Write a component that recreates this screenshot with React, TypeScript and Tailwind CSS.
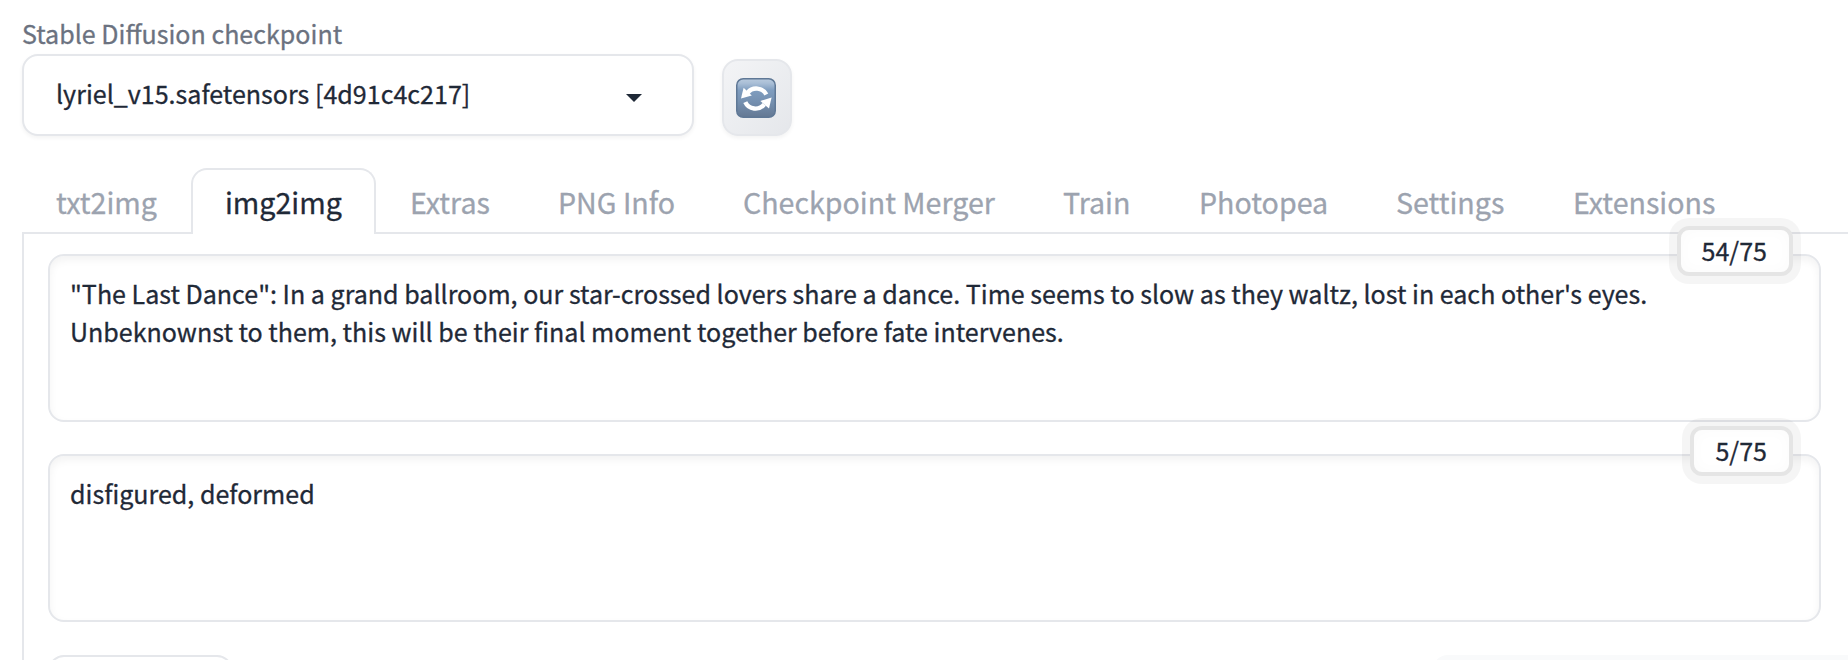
import clsx from 'clsx';

const tabs = [
  { label: 'txt2img', width: 'w-[169px]' },
  { label: 'img2img', width: 'w-[185px]' },
  { label: 'Extras', width: 'w-[148px]' },
  { label: 'PNG Info', width: 'w-[185px]' },
  { label: 'Checkpoint Merger', width: 'w-[320px]' },
  { label: 'Train', width: 'w-[136px]' },
  { label: 'Photopea', width: 'w-[197px]' },
  { label: 'Settings', width: 'w-[177px]' },
  { label: 'Extensions', width: 'w-[210px]' },
];

function RefreshIcon() {
  return (
    <svg width="40" height="40" viewBox="0 0 40 40" fill="none">
      <defs>
        <linearGradient id="tile" x1="0" y1="0" x2="0" y2="1">
          <stop offset="0" stopColor="#b9cade" />
          <stop offset="0.12" stopColor="#a9bed6" />
          <stop offset="0.3" stopColor="#7f9dbf" />
          <stop offset="0.6" stopColor="#7590b0" />
          <stop offset="1" stopColor="#647893" />
        </linearGradient>
      </defs>
      <rect x="0.75" y="0.75" width="38.5" height="38.5" rx="6.5" fill="url(#tile)" stroke="#5f7896" strokeWidth="1.5" />
      <path d="M30.3 16.6A11 10.6 0 0 0 11.6 14.8" stroke="white" strokeWidth="4.4" />
      <path d="M7.6 9.8 5 20.4 15.8 17.4Z" fill="white" />
      <path d="M9.3 24.2A11 10.6 0 0 0 28.2 26.4" stroke="white" strokeWidth="4.4" />
      <path d="M35.6 19.4 33 30.6 24.4 23Z" fill="white" />
    </svg>
  );
}

function PromptBox({ text, count }: { text: string; count: string }) {
  return (
    <div className="relative shrink-0 w-[1773px] h-[168px]">
      <textarea
        readOnly
        value={text}
        className="block w-full h-full resize-none outline-none rounded-[16px] border-2 border-[#e5e7eb] bg-white px-5 pt-[18px] text-[25.06px] leading-[38px] text-[#1f2937] shadow-[inset_0_4px_8px_0_rgba(0,0,0,0.05)]"
      />
      {/* Token counter */}
      <div className="absolute right-7 -top-7 h-[50px] rounded-[12px] border-4 border-[#e5e5e5] bg-white pl-[21px] pr-[22px] text-[25.06px] leading-[41px] text-[#1f2937] shadow-[0_0_0_8px_rgba(0,0,0,0.04),inset_0_0_16px_0_rgba(0,0,0,0.02)]">
        {count}
      </div>
    </div>
  );
}

export default function App() {
  return (
    <div className="w-[1848px] h-[660px] overflow-hidden bg-white pl-[22px] font-['Noto_Sans_CJK_SC',sans-serif] text-[#1f2937] [-webkit-text-stroke:0.3px]">
      {/* Checkpoint row */}
      <div className="flex items-end h-[136px]">
        <div className="w-[672px]">
          <div className="h-[38px] text-[25.06px] leading-[34px] text-[#6b7280]">Stable Diffusion checkpoint</div>
          <div className="flex items-center justify-between h-[82px] rounded-[16px] border-2 border-[#e5e7eb] bg-white pl-8 pr-[50px] shadow-[0_2px_4px_0_rgba(0,0,0,0.05)]">
            <span className="mb-1 text-[25.06px] leading-[38px]">lyriel_v15.safetensors [4d91c4c217]</span>
            <svg className="mt-[6px]" width="16" height="8" viewBox="0 0 16 8">
              <path d="M0 0h16L8 8z" fill="#1f2937" />
            </svg>
          </div>
        </div>
        <button className="ml-7 flex items-center justify-center w-[70px] h-[77px] pr-[2px] rounded-[16px] border-2 border-[#e5e7eb] bg-linear-to-br from-[#f3f4f6] to-[#e5e7eb] shadow-[0_2px_4px_0_rgba(0,0,0,0.05)]">
          <RefreshIcon />
        </button>
      </div>

      {/* Tabs */}
      <div className="mt-8 flex h-[66px]">
        {tabs.map((tab) => (
          <div
            key={tab.label}
            className={clsx(
              'shrink-0 whitespace-nowrap text-[28.6px]',
              tab.width,
              tab.label === 'img2img'
                ? 'rounded-t-[16px] border-2 border-b-0 border-[#e5e7eb] pl-8 leading-[64px]'
                : 'border-b-2 border-[#e5e7eb] pl-[34px] leading-[68px] text-[#9ca3af]',
            )}
          >
            {tab.label}
          </div>
        ))}
        <div className="flex-1 border-b-2 border-[#e5e7eb]" />
      </div>

      {/* Prompts */}
      <div className="flex h-[430px] border-l-2 border-[#e5e7eb] pl-6 pt-5">
        <div className="flex shrink-0 flex-col gap-8">
          <PromptBox
            text={'"The Last Dance": In a grand ballroom, our star-crossed lovers share a dance. Time seems to slow as they waltz, lost in each other\'s eyes. Unbeknownst to them, this will be their final moment together before fate intervenes.'}
            count="54/75"
          />
          <PromptBox text="disfigured, deformed" count="5/75" />
          {/* Tops of the next row */}
          <div className="flex shrink-0 justify-between w-[1800px] mt-px">
            <div className="w-[185px] h-20 rounded-[16px] border-2 border-[#e5e7eb]" />
            <div className="w-[416px] h-20 rounded-tl-[16px] bg-[#f9fafb]" />
          </div>
        </div>
      </div>
    </div>
  );
}
